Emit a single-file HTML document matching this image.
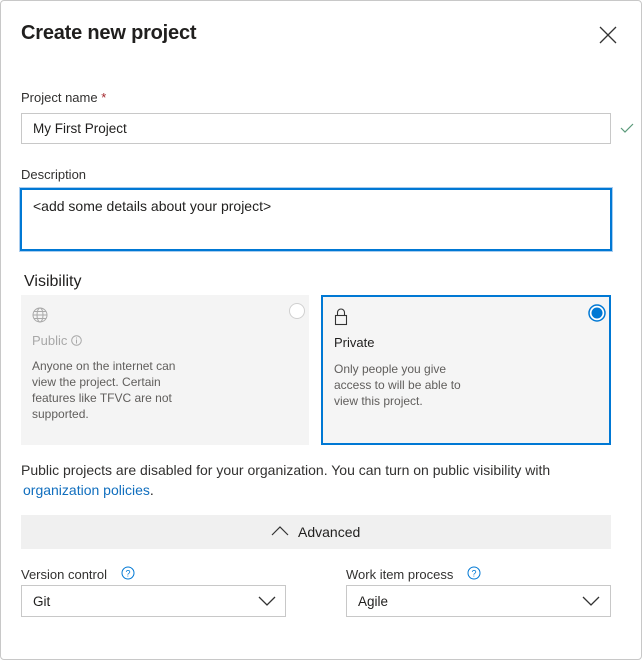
<!DOCTYPE html>
<html><head><style>
*{box-sizing:border-box;margin:0;padding:0}
body{width:643px;height:645px;background:#fff;font-family:"Liberation Sans",sans-serif;color:#201f1e;position:relative;overflow:hidden}
.frame{position:absolute;left:0;top:0;width:642px;height:660px;border:1px solid #c8c8c8;border-radius:4px}
.a{position:absolute;white-space:nowrap}
.lbl{font-size:13px;color:#323130}
.inp{position:absolute;border:1px solid #c8c8c8;background:#fff;font-size:13.5px;padding-left:11px;display:flex;align-items:center}
.card{position:absolute;background:#f4f4f4}
.desc{font-size:12px;line-height:16px;color:#605e5c}
</style></head><body>
<div class="frame"></div>
<div class="a" style="left:21px;top:22px;font-size:20px;font-weight:600;color:#201f1e;letter-spacing:-0.2px">Create new project</div>
<svg class="a" style="left:599px;top:26px" width="18" height="18"><path d="M1 1L17 17M17 1L1 17" stroke="#333" stroke-width="1.3"/></svg>

<div class="a lbl" style="left:21px;top:90px">Project name <span style="color:#a4262c">*</span></div>
<div class="inp" style="left:21px;top:113px;width:590px;height:31px">My First Project</div>
<svg class="a" style="left:620px;top:122px" width="14" height="12"><path d="M1 6L5 10L13 2" stroke="#5a9a7a" stroke-width="1.2" fill="none"/></svg>

<div class="a lbl" style="left:21px;top:167px">Description</div>
<div class="inp" style="left:20px;top:188px;width:592px;height:63px;border:2px solid #0078d4;box-shadow:0 0 0 1px #a9cdef;align-items:flex-start;padding-top:8px;font-size:14px">&lt;add some details about your project&gt;</div>

<div class="a" style="left:24px;top:273px;font-size:16px">Visibility</div>
<div class="card" style="left:21px;top:295px;width:288px;height:150px"></div>
<svg class="a" style="left:32px;top:307px" width="16" height="16"><g fill="none" stroke="#a8a8a8" stroke-width="1"><circle cx="8" cy="8" r="7"/><ellipse cx="8" cy="8" rx="3" ry="7"/><path d="M1 8H15M2 4.5H14M2 11.5H14"/></g></svg>
<svg class="a" style="left:288px;top:302px" width="18" height="18"><circle cx="9" cy="9" r="7.5" fill="#fff" stroke="#d0d0d0"/></svg>
<div class="a" style="left:32px;top:333px;font-size:13px;color:#a8a8a8">Public <svg width="11" height="11" style="vertical-align:-1px"><circle cx="5.5" cy="5.5" r="4.8" fill="none" stroke="#a8a8a8"/><path d="M5.5 4.5V8.5M5.5 2.5V3.5" stroke="#a8a8a8"/></svg></div>
<div class="a desc" style="left:32px;top:358px">Anyone on the internet can<br>view the project. Certain<br>features like TFVC are not<br>supported.</div>

<div class="card" style="left:321px;top:295px;width:290px;height:150px;border:2px solid #0078d4;background:#f5f5f5"></div>
<svg class="a" style="left:334px;top:308px" width="14" height="18"><g fill="none" stroke="#333" stroke-width="1.1"><rect x="1.5" y="7.5" width="11" height="9"/><path d="M3.5 7.5V4.5A3.5 3.5 0 0 1 10.5 4.5V7.5"/></g></svg>
<svg class="a" style="left:587px;top:303px" width="20" height="20"><circle cx="10" cy="10" r="8" fill="#fff" stroke="#0078d4" stroke-width="1.5"/><circle cx="10" cy="10" r="5.5" fill="#0078d4"/></svg>
<div class="a" style="left:334px;top:335px;font-size:13px">Private</div>
<div class="a desc" style="left:334px;top:361px">Only people you give<br>access to will be able to<br>view this project.</div>

<div class="a" style="left:21px;top:462px;font-size:14px;color:#323130">Public projects are disabled for your organization. You can turn on public visibility with</div>
<div class="a" style="left:23px;top:482px;font-size:14px"><span style="color:#106ebe">organization policies</span>.</div>

<div class="a" style="left:21px;top:515px;width:590px;height:34px;background:#f0f0f0"></div>
<svg class="a" style="left:271px;top:525px" width="18" height="12"><path d="M1 10L9 2L17 10" stroke="#333" stroke-width="1.2" fill="none"/></svg>
<div class="a" style="left:298px;top:524px;font-size:14px">Advanced</div>

<div class="a lbl" style="left:21px;top:567px">Version control</div>
<svg class="a" style="left:121px;top:566px" width="14" height="14"><circle cx="7" cy="7" r="6" fill="none" stroke="#0078d4"/><text x="7" y="10.5" font-size="9" text-anchor="middle" fill="#0078d4" font-family="Liberation Sans">?</text></svg>
<div class="inp" style="left:21px;top:585px;width:265px;height:32px">Git</div>
<svg class="a" style="left:258px;top:595px" width="18" height="12"><path d="M1 2L9 10L17 2" stroke="#333" stroke-width="1.3" fill="none"/></svg>

<div class="a lbl" style="left:346px;top:567px">Work item process</div>
<svg class="a" style="left:467px;top:566px" width="14" height="14"><circle cx="7" cy="7" r="6" fill="none" stroke="#0078d4"/><text x="7" y="10.5" font-size="9" text-anchor="middle" fill="#0078d4" font-family="Liberation Sans">?</text></svg>
<div class="inp" style="left:346px;top:585px;width:265px;height:32px">Agile</div>
<svg class="a" style="left:582px;top:595px" width="18" height="12"><path d="M1 2L9 10L17 2" stroke="#333" stroke-width="1.3" fill="none"/></svg>
</body></html>
